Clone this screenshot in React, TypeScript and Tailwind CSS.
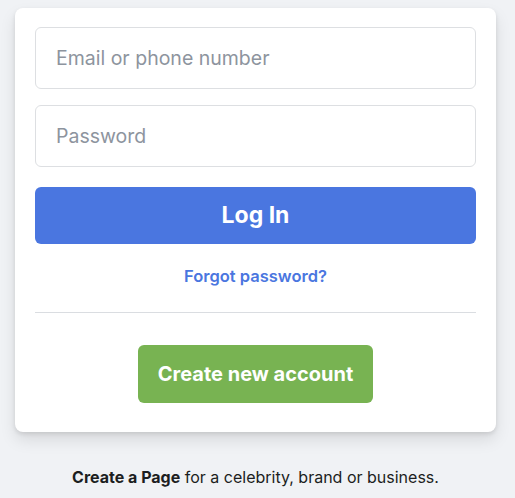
export default function App() {
    return (
        <div className="min-h-screen bg-[#f0f2f5] pt-2 pl-[15px] font-['Inter','Liberation_Sans',sans-serif]">
            <div className="w-[481px] bg-white rounded-lg shadow-[0_2px_4px_rgba(0,0,0,0.1),0_8px_16px_rgba(0,0,0,0.1)] px-5 pt-[19px] pb-[29px] flex flex-col">
                <input type="text" placeholder="Email or phone number"
                    className="h-[62px] w-full border border-[#dddfe2] rounded-md px-5 text-[19.5px] text-[#1c1e21] placeholder:text-[#8d949e] focus-visible:outline-none" />
                <input type="password" placeholder="Password"
                    className="mt-4 h-[62px] w-full border border-[#dddfe2] rounded-md px-5 text-[19.5px] text-[#1c1e21] placeholder:text-[#8d949e] focus-visible:outline-none" />
                <button type="button" className="mt-5 h-[57px] w-full rounded-md bg-[#4a76e0] text-white text-[23px] font-bold">
                    Log In
                </button>
                <a href="#" className="mt-[22px] self-center text-[16.5px] leading-5 font-semibold text-[#4a76e0]">
                    Forgot password?
                </a>
                <div className="mt-[26px] h-px bg-[#dadde1]" />
                <button type="button" className="mt-8 self-center h-[58px] px-5 rounded-md bg-[#78b352] text-white text-xl font-bold">
                    Create new account
                </button>
            </div>
            <p className="w-[481px] mt-[35px] text-center text-base leading-5 text-[#1c1e21]">
                <span className="font-bold">Create a Page</span> for a celebrity, brand or business.
            </p>
        </div>
    )
}
